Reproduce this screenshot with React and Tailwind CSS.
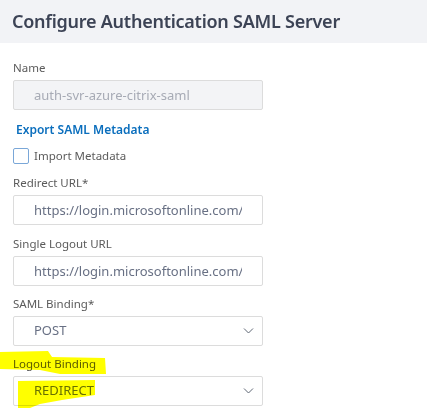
import { useState } from 'react';

const labelCls = 'block h-[16px] text-[11.5px] leading-[16px] text-[#5b5b5b]';
const inputCls =
  'block w-[250px] h-[30px] rounded-[2px] border border-[#dcdcdc] px-[20px] text-[13px] text-[#687084] outline-none';

function Chevron() {
  return (
    <svg className="absolute right-[8px] top-1/2 -translate-y-1/2" width="11" height="7" viewBox="0 0 11 7" fill="none">
      <path d="M1 1l4.5 4.5L10 1" stroke="#5f6675" strokeWidth="1" />
    </svg>
  );
}

function Select({ value }) {
  return (
    <div className="relative w-[250px] h-[30px] rounded-[2px] border border-[#dcdcdc] bg-white flex items-center px-[20px] text-[13px] text-[#687084]">
      <span>{value}</span>
      <Chevron />
    </div>
  );
}

export default function App() {
  const [importMeta, setImportMeta] = useState(false);

  return (
    <div className="relative w-[427px] h-[414px] bg-white overflow-hidden" style={{ fontFamily: '"Noto Sans", "Open Sans", sans-serif' }}>
      <div className="h-[43px] bg-[#f2f3f6] flex items-center px-[12px] pb-[1px]">
        <h1 className="text-[18px] font-semibold tracking-[-0.25px] text-[#3c4355]">Configure Authentication SAML Server</h1>
      </div>

      <div className="px-[13px] pt-[17px] flex flex-col">
        <label className={labelCls}>Name</label>
        <input className={`${inputCls} mt-[4px] bg-[#f3f4f6] text-[#a7abb5]`} value="auth-svr-azure-citrix-saml" disabled readOnly />

        <a href="#" className="block h-[18px] mt-[11px] ml-[3px] text-[12px] leading-[18px] font-semibold text-[#0a6ebd]">Export SAML Metadata</a>

        <label className="h-[16px] mt-[9px] flex items-center gap-[5px] text-[11.5px] text-[#5b5b5b]">
          <input
            type="checkbox"
            checked={importMeta}
            onChange={(e) => setImportMeta(e.target.checked)}
            className="appearance-none w-[16px] h-[16px] rounded-[2px] border border-[#7aa7d8] bg-white"
          />
          Import Metadata
        </label>

        <label className={`${labelCls} mt-[11px]`}>Redirect URL*</label>
        <input className={`${inputCls} mt-[4px] bg-white`} defaultValue="https://login.microsoftonline.com/0f4e3c2a-saml2" />

        <label className={`${labelCls} mt-[11px]`}>Single Logout URL</label>
        <input className={`${inputCls} mt-[4px] bg-white`} defaultValue="https://login.microsoftonline.com/0f4e3c2a-saml2" />

        <label className={`${labelCls} mt-[10px]`}>SAML Binding*</label>
        <div className="mt-[4px]">
          <Select value="POST" />
        </div>

        <label className={`${labelCls} mt-[10px]`}>Logout Binding</label>
        <div className="mt-[4px]">
          <Select value="REDIRECT" />
        </div>
      </div>

      {/* yellow marker strokes over the last field */}
      <svg className="absolute inset-0 pointer-events-none mix-blend-multiply" width="427" height="414" viewBox="0 0 427 414">
        <polygon points="0,352 48,351 52,357 105,358 106,374 60,374 40,370 0,369" fill="#ffff00" />
        <polygon points="18,381 95,380 95,395 62,400 40,404 30,408 18,408" fill="#ffff00" />
      </svg>
    </div>
  );
}
